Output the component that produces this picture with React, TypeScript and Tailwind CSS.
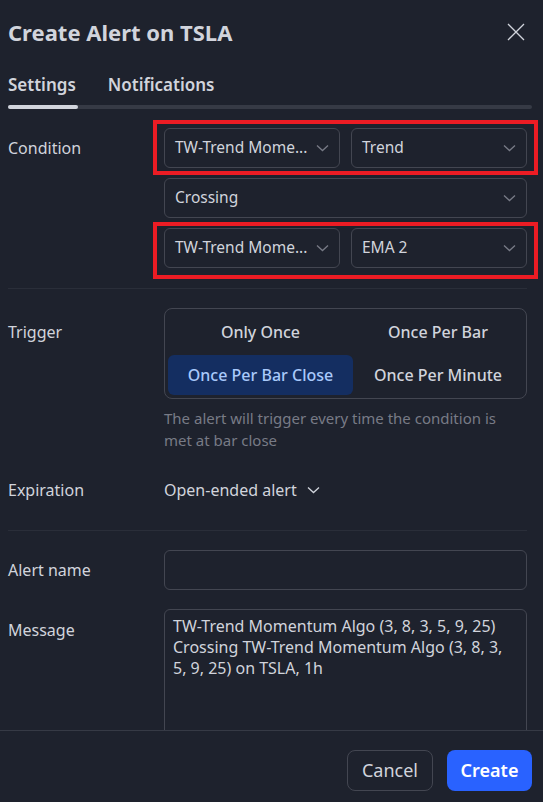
import React from 'react';

const Chevron: React.FC<{ className?: string }> = ({ className = '' }) => (
  <svg width="13" height="8" viewBox="0 0 13 8" fill="none" className={className}>
    <path d="M1 1.5l5.5 5 5.5-5" stroke="currentColor" strokeWidth="1.3" />
  </svg>
);

const Select: React.FC<{ label: string; className?: string }> = ({ label, className = '' }) => (
  <div
    className={`h-10 flex items-center justify-between pl-[10px] pr-[10px] rounded-md border border-[#434651] text-[15.5px] text-[#d1d4dc] ${className}`}
  >
    <span className="whitespace-nowrap">{label}</span>
    <Chevron className="text-[#787b86] shrink-0 ml-2" />
  </div>
);

// red markup box around a pair of selects
const Marked: React.FC<{ children: React.ReactNode; className?: string }> = ({ children, className = '' }) => (
  <div className={`-mx-[11px] border-4 border-[#ec1c24] px-[7px] ${className}`}>{children}</div>
);

export default function App() {
  const triggers = ['Only Once', 'Once Per Bar', 'Once Per Bar Close', 'Once Per Minute'];

  return (
    <div
      className="w-[543px] h-[802px] bg-[#1e222d] text-[#d1d4dc] flex flex-col overflow-hidden"
      style={{ fontFamily: '"Noto Sans", "Open Sans", sans-serif' }}
    >
      {/* Header */}
      <div className="h-16 shrink-0 flex items-center justify-between pl-2 pr-[18px]">
        <h1 className="text-[22px] font-bold text-[#d1d4dc]">Create Alert on TSLA</h1>
        <svg width="18" height="18" viewBox="0 0 18 18" className="text-[#d1d4dc]">
          <path d="M1 1l16 16M17 1L1 17" stroke="currentColor" strokeWidth="1.3" />
        </svg>
      </div>

      {/* Tabs */}
      <div className="shrink-0 pl-2 pr-[11px]">
        <div className="h-[41px] flex items-center gap-[32px] text-[17px] font-semibold">
          <span className="text-[#d1d4dc]">Settings</span>
          <span className="text-[#d1d4dc]">Notifications</span>
        </div>
        <div className="h-1 rounded-full bg-[#363a45] flex">
          <div className="w-[70px] h-1 rounded-full bg-[#d1d4dc]" />
        </div>
      </div>

      {/* Body */}
      <div className="flex-1 overflow-hidden pl-2 pr-4 pt-[11px]">
        {/* Condition */}
        <div className="flex">
          <div className="w-[156px] h-[55px] flex items-center text-[16px]">Condition</div>
          <div className="flex-1">
            <Marked className="pt-1 pb-[3px]">
              <div className="flex gap-[11px]">
                <Select label="TW-Trend Mome..." className="w-[176px]" />
                <Select label="Trend" className="flex-1" />
              </div>
            </Marked>
            <Select label="Crossing" className="mt-[3px]" />
            <Marked className="mt-1 pt-[2px] pb-[7px]">
              <div className="flex gap-[11px]">
                <Select label="TW-Trend Mome..." className="w-[176px]" />
                <Select label="EMA 2" className="flex-1" />
              </div>
            </Marked>
          </div>
        </div>

        <div className="mt-[9px] h-px bg-[#2a2e39]" />

        {/* Trigger */}
        <div className="mt-[19px] flex">
          <div className="w-[156px] h-12 flex items-center text-[16px]">Trigger</div>
          <div className="flex-1">
            <div className="border border-[#434651] rounded-lg p-[3px] grid grid-cols-[185px_1fr] gap-y-[3px]">
              {triggers.map((t) => (
                <div
                  key={t}
                  className={`h-10 flex items-center justify-center rounded-md text-[16px] font-medium ${
                    t === 'Once Per Bar Close' ? 'bg-[#142e61] text-[#a9c9fb]' : 'text-[#d1d4dc]'
                  }`}
                >
                  {t}
                </div>
              ))}
            </div>
            <p className="mt-2 text-[15px] leading-[22px] text-[#787b86]">
              The alert will trigger every time the condition is met at bar close
            </p>
          </div>
        </div>

        {/* Expiration */}
        <div className="mt-[27px] flex h-6 items-center">
          <div className="w-[156px] text-[16px]">Expiration</div>
          <div className="flex items-center gap-[10px] text-[16px]">
            <span>Open-ended alert</span>
            <Chevron className="text-[#d1d4dc]" />
          </div>
        </div>

        <div className="mt-[28px] h-px bg-[#2a2e39]" />

        {/* Alert name */}
        <div className="mt-[19px] flex items-center">
          <div className="w-[156px] text-[16px]">Alert name</div>
          <div className="flex-1 h-10 rounded-md border border-[#434651]" />
        </div>

        {/* Message */}
        <div className="mt-[19px] flex items-start">
          <div className="w-[156px] pt-[9px] leading-6 text-[16px]">Message</div>
          <div className="flex-1 h-[160px] rounded-md border border-[#434651] px-2 pt-[6px] text-[16px] leading-[21px] text-[#d1d4dc]">
            TW-Trend Momentum Algo (3, 8, 3, 5, 9, 25) Crossing TW-Trend Momentum Algo (3, 8, 3, 5, 9, 25) on TSLA, 1h
          </div>
        </div>
      </div>

      {/* Footer */}
      <div className="h-[72px] shrink-0 border-t border-[#363a45] flex items-start justify-end gap-[14px] pt-[19px] pr-[11px]">
        <button className="w-[86px] h-[41px] rounded-lg border border-[#434651] text-[18px] text-[#d1d4dc]">
          Cancel
        </button>
        <button className="w-[85px] h-[41px] rounded-lg bg-[#2962ff] text-[18px] font-semibold text-white">
          Create
        </button>
      </div>
    </div>
  );
}
